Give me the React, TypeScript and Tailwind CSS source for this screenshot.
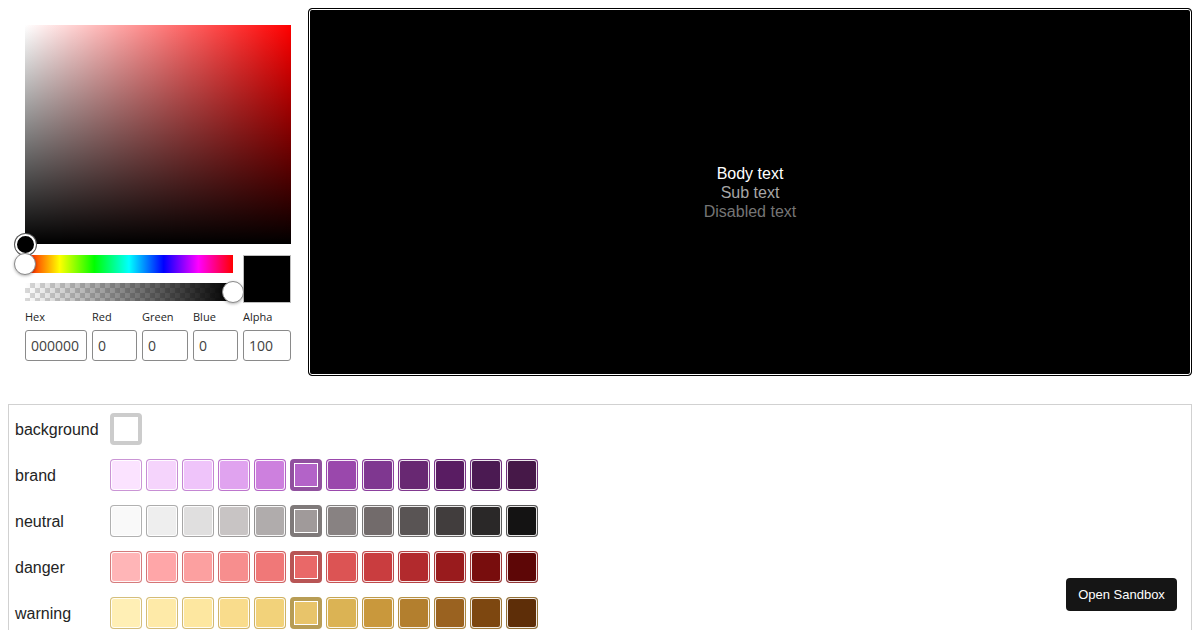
import React from 'react'

type Palette = {
  name: string
  border: string
  selected: string
  swatches: string[]
}

const palettes: Palette[] = [
  {
    name: 'brand',
    border: 'border-[#9a48ac]/50',
    selected: 'border-[#91519f]',
    swatches: [
      'bg-[#fbe3ff]', 'bg-[#f5d4fc]', 'bg-[#efc4fa]', 'bg-[#e0a3ef]', 'bg-[#cd80de]', 'bg-[#b363c8]',
      'bg-[#9a48ac]', 'bg-[#7f3790]', 'bg-[#682872]', 'bg-[#591c62]', 'bg-[#4b1a52]', 'bg-[#461848]',
    ],
  },
  {
    name: 'neutral',
    border: 'border-[#808080]/60',
    selected: 'border-[#7f7a7a]',
    swatches: [
      'bg-[#f9f9f9]', 'bg-[#eeeeee]', 'bg-[#e0dfdf]', 'bg-[#c8c4c4]', 'bg-[#b0acac]', 'bg-[#a09a9a]',
      'bg-[#888282]', 'bg-[#726b6b]', 'bg-[#595454]', 'bg-[#413d3d]', 'bg-[#2a2828]', 'bg-[#141313]',
    ],
  },
  {
    name: 'danger',
    border: 'border-[#b85555]/60',
    selected: 'border-[#b85555]',
    swatches: [
      'bg-[#ffb5b7]', 'bg-[#ffa6a8]', 'bg-[#fca0a0]', 'bg-[#f78e8e]', 'bg-[#f07878]', 'bg-[#e96868]',
      'bg-[#dc5454]', 'bg-[#c93d3f]', 'bg-[#b22a2d]', 'bg-[#991b1d]', 'bg-[#780d0d]', 'bg-[#5d0606]',
    ],
  },
  {
    name: 'warning',
    border: 'border-[#b89d55]/60',
    selected: 'border-[#b89d55]',
    swatches: [
      'bg-[#ffefb5]', 'bg-[#feeaa8]', 'bg-[#fde7a0]', 'bg-[#f9dc8c]', 'bg-[#f2d27a]', 'bg-[#e8c46a]',
      'bg-[#dbb354]', 'bg-[#c9983c]', 'bg-[#b37f2e]', 'bg-[#9a6220]', 'bg-[#7d4710]', 'bg-[#5e2e08]',
    ],
  },
  {
    name: 'success',
    border: 'border-[#4c8a4c]/60',
    selected: 'border-[#4c8a4c]',
    swatches: [
      'bg-[#d8f5d8]', 'bg-[#c8efc8]', 'bg-[#b5e8b5]', 'bg-[#9cdd9c]', 'bg-[#80cf80]', 'bg-[#68c068]',
      'bg-[#54ae54]', 'bg-[#429a42]', 'bg-[#338433]', 'bg-[#266e26]', 'bg-[#1a581a]', 'bg-[#104210]',
    ],
  },
]

const fields = [
  { label: 'Hex', value: '000000', width: 'w-[62px]' },
  { label: 'Red', value: '0', width: 'w-[45px]' },
  { label: 'Green', value: '0', width: 'w-[46px]' },
  { label: 'Blue', value: '0', width: 'w-[45px]' },
  { label: 'Alpha', value: '100', width: 'w-[48px]' },
]

const ColorPicker = () => (
  <div className="w-[300px] shrink-0 px-[17px] pt-[17px] font-['Open_Sans',sans-serif]">
    {/* Saturation / value area */}
    <div className="relative h-[219px] w-full bg-[#ff0000]">
      <div className="absolute inset-0 bg-[linear-gradient(to_right,#ffffff,rgba(255,255,255,0))]" />
      <div className="absolute inset-0 bg-[linear-gradient(to_top,#000000,rgba(0,0,0,0))]" />
      <div className="absolute -left-[10px] -bottom-[11px] size-[21px] rounded-full bg-black border-2 border-white shadow-[0_0_0_1px_#555]" />
    </div>

    {/* Hue / alpha + preview */}
    <div className="mt-[11px] flex gap-[10px]">
      <div className="flex flex-1 flex-col gap-[10px]">
        <div className="relative h-[18px] bg-[linear-gradient(to_right,#f00,#ff0,#0f0,#0ff,#00f,#f0f,#f00)]">
          <div className="absolute -left-[11px] -top-[2px] size-[22px] rounded-full bg-white border border-[#8a8a8a] shadow-[0_1px_3px_rgba(0,0,0,0.3)]" />
        </div>
        <div className="relative h-[18px] bg-[repeating-conic-gradient(#d9d9d9_0%_25%,#ffffff_0%_50%)] bg-[length:10px_10px]">
          <div className="absolute inset-0 bg-[linear-gradient(to_right,rgba(0,0,0,0),#000000)]" />
          <div className="absolute -right-[11px] -top-[2px] size-[22px] rounded-full bg-white border border-[#8a8a8a] shadow-[0_1px_3px_rgba(0,0,0,0.3)]" />
        </div>
      </div>
      <div className="size-[48px] border border-[#bdbdbd] bg-black" />
    </div>

    {/* Inputs */}
    <div className="mt-[7px] flex gap-[5px]">
      {fields.map((f) => (
        <div key={f.label} className="flex flex-col">
          <label className="text-[11px] leading-[14px] text-[#242424]">{f.label}</label>
          <input
            readOnly
            value={f.value}
            className={`${f.width} mt-[6px] h-[31px] rounded-[3px] border border-[#8a8a8a] px-[5px] text-[14px] text-[#424242] outline-none`}
          />
        </div>
      ))}
    </div>
  </div>
)

const Swatch = ({ color, border, selected }: { color: string; border: string; selected?: string }) => {
  if (selected) {
    return (
      <div className={`size-[32px] rounded-[4px] border-4 ${selected} ${color} shadow-[inset_0_0_0_1px_#ffffff]`} />
    )
  }
  return (
    <div className={`size-[32px] rounded-[4px] border ${border} ${color} shadow-[inset_0_0_0_1px_rgba(255,255,255,0.9)]`} />
  )
}

export default function App() {
  return (
    <div className="relative h-[630px] overflow-hidden bg-white p-2 font-['Liberation_Sans',Arial,sans-serif]">
      {/* Top section */}
      <div className="flex">
        <ColorPicker />
        <div className="flex h-[368px] flex-1 flex-col items-center justify-center rounded-[4px] border border-black bg-black text-[16px] leading-[19px] shadow-[inset_0_0_0_1px_#ffffff]">
          <span className="text-white">Body text</span>
          <span className="text-[#a6a6a6]">Sub text</span>
          <span className="text-[#757575]">Disabled text</span>
        </div>
      </div>

      {/* Palette grid */}
      <div className="mt-[28px] flex flex-col gap-[14px] border border-[#d1d1d1] px-[6px] pt-[8px] pb-4">
        <div className="flex items-center">
          <span className="w-[95px] pt-[2px] text-[16px] text-[#242424]">background</span>
          <div className="size-[32px] rounded-[4px] border-4 border-[#cccccc] bg-white" />
        </div>
        {palettes.map((p) => (
          <div key={p.name} className="flex items-center">
            <span className="w-[95px] pt-[2px] text-[16px] text-[#242424]">{p.name}</span>
            <div className="flex gap-[4px]">
              {p.swatches.map((c, i) => (
                <Swatch key={c} color={c} border={p.border} selected={i === 5 ? p.selected : undefined} />
              ))}
            </div>
          </div>
        ))}
      </div>

      {/* Floating sandbox button */}
      <button className="absolute right-[23px] bottom-[19px] h-[33px] w-[111px] rounded-[4px] bg-[#151515] text-[13px] text-white">
        Open Sandbox
      </button>
    </div>
  )
}
